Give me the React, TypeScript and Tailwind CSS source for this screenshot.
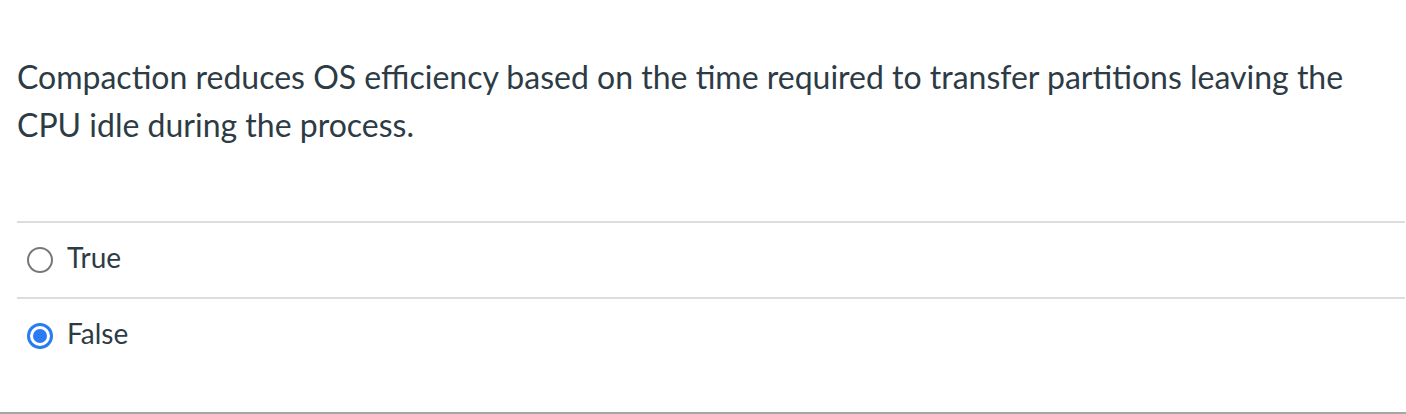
import React from "react";

export default function App() {
  return (
    <div className="w-[1406px] h-[414px] bg-white flex flex-col" style={{ fontFamily: "Lato, 'Open Sans', sans-serif" }}>
      <div className="flex-1 pl-[17px] pr-[1px]">
        <p className="pt-[53px] text-[32px] leading-[48px] text-[#2d3b45] max-w-[1350px]">
          Compaction reduces OS efficiency based on the time required to transfer partitions leaving the CPU idle during the process.
        </p>
        <div className="mt-[72px] border-t-2 border-[#dddddd]">
          <div className="h-[74px] flex items-center gap-[14px] pl-[10px]">
            <span className="w-[26px] h-[26px] rounded-full border-2 border-[#777777] bg-white" />
            <span className="text-[28px] leading-[34px] text-[#2d3b45] -mt-[6px]">True</span>
          </div>
        </div>
        <div className="border-t-2 border-[#dddddd]">
          <div className="h-[74px] flex items-center gap-[14px] pl-[10px]">
            <span className="w-[26px] h-[26px] rounded-full border-[3px] border-[#2b7bf3] bg-white flex items-center justify-center">
              <span className="w-[14px] h-[14px] rounded-full bg-[#2b7bf3]" />
            </span>
            <span className="text-[28px] leading-[34px] text-[#2d3b45] -mt-[6px]">False</span>
          </div>
        </div>
      </div>
      <div className="h-[2px] bg-[#a6a6a6]" />
    </div>
  );
}
